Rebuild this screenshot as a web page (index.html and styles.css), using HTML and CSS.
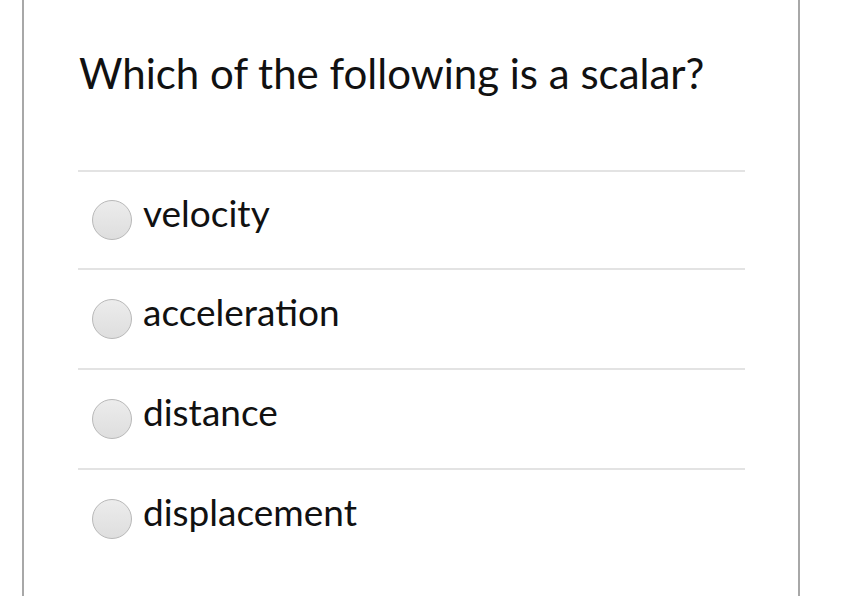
FILE: index.html
```html
<!DOCTYPE html>
<html lang="en">
<head>
<meta charset="utf-8">
<title>Question</title>
<link rel="stylesheet" href="styles.css">
</head>
<body>
<div class="card">
  <h1 class="question">Which of the following is a scalar?</h1>
  <ul class="options">
    <li class="option"><span class="radio"></span><span class="label">velocity</span></li>
    <li class="option"><span class="radio"></span><span class="label">acceleration</span></li>
    <li class="option"><span class="radio"></span><span class="label">distance</span></li>
    <li class="option"><span class="radio"></span><span class="label">displacement</span></li>
  </ul>
</div>
</body>
</html>
```

FILE: styles.css
```css
html, body {
  margin: 0;
  padding: 0;
  background: #ffffff;
  height: 100%;
  overflow: hidden;
}
body {
  font-family: Lato, "Open Sans", sans-serif;
  color: #111111;
}
.card {
  margin-left: 22px;
  width: 778px;
  box-sizing: border-box;
  min-height: 100%;
  border-left: 2px solid #a8a8a8;
  border-right: 2px solid #a8a8a8;
  padding: 48px 53px 0 54px;
}
.question {
  margin: 0 0 0 1px;
  font-size: 42px;
  font-weight: 400;
  line-height: 1.2;
}
.options {
  list-style: none;
  margin: 72px 0 0 0;
  padding: 0;
}
.option {
  display: flex;
  align-items: center;
  gap: 11px;
  height: 98px;
  border-top: 2px solid #e3e3e3;
  padding-left: 14px;
}
.option:first-child {
  height: 96px;
}
.radio {
  width: 40px;
  height: 40px;
  border-radius: 50%;
  box-sizing: border-box;
  border: 1px solid #b8b8b8;
  background: linear-gradient(#ececec, #dedede);
  flex: none;
}
.label {
  font-size: 37px;
  line-height: 1.2;
  margin-bottom: 14px;
}
```
